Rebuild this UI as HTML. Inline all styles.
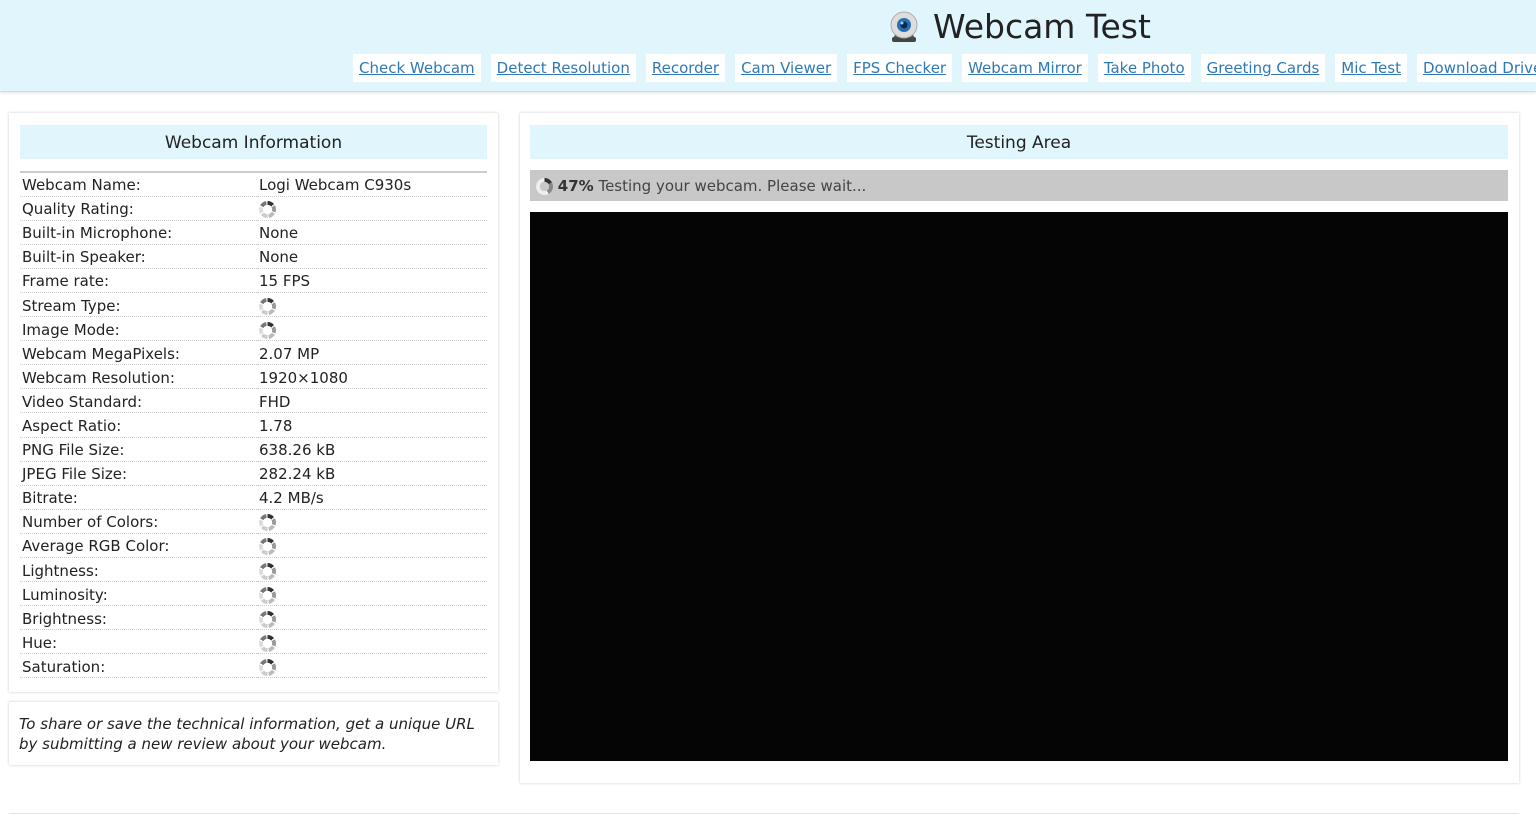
<!DOCTYPE html>
<html><head><style>
*{box-sizing:border-box;margin:0;padding:0}
body{width:1536px;height:816px;overflow:hidden;background:#fff;font-family:"DejaVu Sans","Liberation Sans",sans-serif;color:#222;position:relative}
.hdr{position:absolute;left:0;top:0;width:1536px;height:92px;background:#e1f5fd;border-bottom:1px solid #d6dde0;box-shadow:0 1px 3px rgba(0,0,0,.12)}
.title{position:absolute;left:886px;top:7px;font-size:33px;color:#222;display:flex;align-items:center;white-space:nowrap}
.nav{position:absolute;left:353px;top:54px;display:flex;white-space:nowrap}
.nav a{background:#fff;color:#2f79b5;text-decoration:underline;font-size:15px;padding:5px 6px;margin-right:10px;height:28px;line-height:19px}
.panel{position:absolute;background:#fff;box-shadow:0 0 3px rgba(0,0,0,.2)}
.ph{position:absolute;background:#e1f5fd;text-align:center;font-size:17px;line-height:36px;color:#222}
table{position:absolute;left:20px;top:171px;width:467px;border-collapse:collapse;border-top:2px solid #ccc;font-size:15px}
td{height:24.1px;border-bottom:1px dotted #ccc;padding:2px 0 0 2px;vertical-align:middle;line-height:18px}
td:first-child{width:237px}
.sp{display:inline-block;width:17px;height:17px;vertical-align:middle;border-radius:50%;background:radial-gradient(circle,#fff 38%,transparent 40%),conic-gradient(#333 0 50deg,#fff 50deg 60deg,#999 60deg 110deg,#fff 110deg 120deg,#bbb 120deg 170deg,#fff 170deg 180deg,#ccc 180deg 230deg,#fff 230deg 240deg,#ddd 240deg 290deg,#fff 290deg 300deg,#777 300deg 350deg,#fff 350deg)}
</style></head><body>
<div class="hdr">
<div class="title"><svg width="36" height="34" viewBox="0 0 36 34"><rect x="6" y="27" width="24" height="5" rx="2" fill="#444"/><path d="M12 22 L9 28 M24 22 L27 28" stroke="#555" stroke-width="3"/><circle cx="18" cy="15" r="13" fill="#ddd" stroke="#aaa"/><circle cx="18" cy="15" r="7" fill="#2a6fb0"/><circle cx="18" cy="15" r="3.5" fill="#0c2a50"/><circle cx="16" cy="13" r="1.5" fill="#9cf"/></svg><span style="margin-left:11px">Webcam Test</span></div>
<div class="nav"><a>Check Webcam</a><a>Detect Resolution</a><a>Recorder</a><a>Cam Viewer</a><a>FPS Checker</a><a>Webcam Mirror</a><a>Take Photo</a><a>Greeting Cards</a><a>Mic Test</a><a>Download Drivers</a></div>
</div>
<div class="panel" style="left:9px;top:113px;width:489px;height:579px"></div>
<div class="ph" style="left:20px;top:125px;width:467px;height:34px">Webcam Information</div>
<table>
<tr><td>Webcam Name:</td><td>Logi Webcam C930s</td></tr>
<tr><td>Quality Rating:</td><td><span class="sp"></span></td></tr>
<tr><td>Built-in Microphone:</td><td>None</td></tr>
<tr><td>Built-in Speaker:</td><td>None</td></tr>
<tr><td>Frame rate:</td><td>15 FPS</td></tr>
<tr><td>Stream Type:</td><td><span class="sp"></span></td></tr>
<tr><td>Image Mode:</td><td><span class="sp"></span></td></tr>
<tr><td>Webcam MegaPixels:</td><td>2.07 MP</td></tr>
<tr><td>Webcam Resolution:</td><td>1920×1080</td></tr>
<tr><td>Video Standard:</td><td>FHD</td></tr>
<tr><td>Aspect Ratio:</td><td>1.78</td></tr>
<tr><td>PNG File Size:</td><td>638.26 kB</td></tr>
<tr><td>JPEG File Size:</td><td>282.24 kB</td></tr>
<tr><td>Bitrate:</td><td>4.2 MB/s</td></tr>
<tr><td>Number of Colors:</td><td><span class="sp"></span></td></tr>
<tr><td>Average RGB Color:</td><td><span class="sp"></span></td></tr>
<tr><td>Lightness:</td><td><span class="sp"></span></td></tr>
<tr><td>Luminosity:</td><td><span class="sp"></span></td></tr>
<tr><td>Brightness:</td><td><span class="sp"></span></td></tr>
<tr><td>Hue:</td><td><span class="sp"></span></td></tr>
<tr><td>Saturation:</td><td><span class="sp"></span></td></tr>
</table>
<div class="panel" style="left:9px;top:702px;width:489px;height:63px;padding:12px 10px;font-style:italic;font-size:15px;line-height:20px">To share or save the technical information, get a unique URL by submitting a new review about your webcam.</div>
<div class="panel" style="left:520px;top:113px;width:999px;height:670px"></div>
<div class="ph" style="left:530px;top:125px;width:978px;height:34px">Testing Area</div>
<div style="position:absolute;left:530px;top:170px;width:978px;height:31px;background:#c8c8c8;font-size:15px;line-height:33px;padding-left:6px;color:#444"><span class="sp" style="background:radial-gradient(circle,#c8c8c8 38%,transparent 40%),conic-gradient(#333 0 60deg,#888 60deg 150deg,#eee 150deg 360deg)"></span> <b style="color:#333">47%</b> Testing your webcam. Please wait...</div>
<div style="position:absolute;left:530px;top:212px;width:978px;height:549px;background:#050505"></div>
<div style="position:absolute;left:9px;top:813px;width:1510px;height:1px;background:#e5e5e5"></div>
</body></html>
